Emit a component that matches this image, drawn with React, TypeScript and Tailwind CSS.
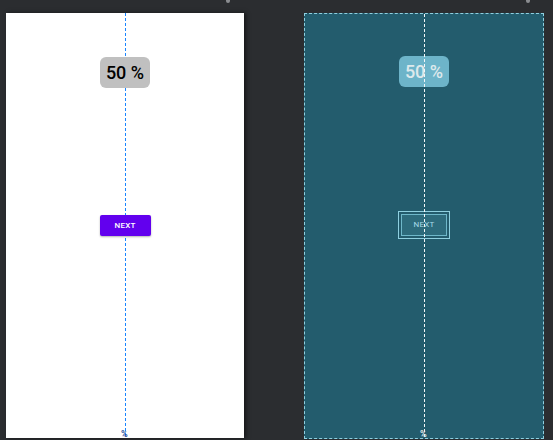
import React from "react";

const font = { fontFamily: "Roboto, 'Noto Sans', sans-serif" };

export default function App() {
  return (
    <div className="relative w-[553px] h-[440px] overflow-hidden bg-[#2b2d30]" style={font}>
      {/* top markers */}
      <div className="absolute left-[226px] top-0 w-[4px] h-[3px] rounded-b bg-[#8a8c90]" />
      <div className="absolute left-[526px] top-0 w-[4px] h-[3px] rounded-b bg-[#8a8c90]" />

      <div className="flex gap-[60px] pl-[6px] pt-[13px]">
        {/* Design view */}
        <div className="relative w-[238px] h-[425px] bg-white shadow-[2px_0_4px_rgba(0,0,0,0.5)] flex flex-col items-center">
          <div className="absolute left-[119px] top-0 bottom-0 w-px bg-[repeating-linear-gradient(to_bottom,#1a84ff_0_3px,transparent_3px_5px)]" />
          <div className="relative mt-[44px] w-[50px] h-[31px] rounded-md bg-[#c0c0c0] flex items-center justify-center text-[18px] font-medium text-black">
            50 %
          </div>
          <div className="relative mt-[127px] w-[51px] h-[21px] rounded-[2px] bg-[#6200ee] shadow-[0_1px_2px_rgba(0,0,0,0.3)] flex items-center justify-center text-[8px] font-medium tracking-wide text-white">
            NEXT
          </div>
        </div>

        {/* Blueprint view */}
        <div className="relative w-[240px] h-[426px] bg-[#235c6d] border border-dashed border-[#8fd0e0] flex flex-col items-center">
          <div className="relative mt-[42px] w-[50px] h-[31px] rounded-md bg-[#6db4c9] flex items-center justify-center text-[18px] font-medium text-[#dde9ec]">
            50 %
          </div>
          <div className="relative mt-[124px] w-[52px] h-[28px] border border-[#8fd0e0] p-[2px]">
            <div className="w-full h-full border border-[#6fb8ca] bg-[#2d6b7c] flex items-center justify-center text-[8px] tracking-wide text-[#a8dbe8]">
              NEXT
            </div>
          </div>
          <div className="absolute left-[119px] top-0 bottom-0 w-px bg-[repeating-linear-gradient(to_bottom,#f4f8f9_0_3px,transparent_3px_5px)]" />
        </div>
      </div>

      {/* % glyphs at bottom */}
      <div className="absolute left-[121px] top-[430px] text-[9px] font-bold leading-none text-[#1e4f9a]">%</div>
      <div className="absolute left-[420px] top-[430px] text-[9px] font-bold leading-none text-[#e5ecee]">%</div>
    </div>
  );
}
